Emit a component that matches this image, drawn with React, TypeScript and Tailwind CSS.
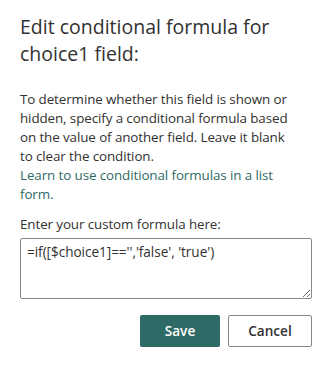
import React from "react";

const font = "'Segoe UI', 'Open Sans', sans-serif";

export default function App() {
  return (
    <div
      className="w-[333px] h-[368px] bg-white text-[#323130] pl-5 pr-[21px] pt-[13px]"
      style={{ fontFamily: font }}
    >
      <h1 className="text-[19.5px] leading-[27px] font-normal">
        Edit conditional formula for choice1 field:
      </h1>
      <div className="mt-[23px] text-[13.4px] tracking-[-0.1px] leading-[19px] whitespace-nowrap">
        <p>
          To determine whether this field is shown or
          <br />
          hidden, specify a conditional formula based
          <br />
          on the value of another field. Leave it blank
          <br />
          to clear the condition.
        </p>
        <a href="#" className="text-[#2f6b66] block">
          Learn to use conditional formulas in a list
          <br />
          form.
        </a>
      </div>
      <label className="block mt-[11px] text-[13.4px] tracking-[-0.1px] leading-[19px]">
        Enter your custom formula here:
      </label>
      <textarea
        className="mt-[4px] block w-full h-[61px] border border-[#8a8886] rounded-[2px] px-[6px] py-[3px] text-[13.6px] tracking-[-0.05px] leading-[19px] text-[#323130] outline-none"
        style={{ fontFamily: font }}
        defaultValue="=if([$choice1]=='','false', 'true')"
      />
      <div className="mt-[16px] flex justify-end gap-2">
        <button className="h-8 w-[80px] rounded-[2px] bg-[#2f6b66] text-white text-[13.6px] font-semibold">
          Save
        </button>
        <button className="h-8 w-[84px] rounded-[2px] bg-white border border-[#8a8886] text-[#323130] text-[13.6px] font-semibold">
          Cancel
        </button>
      </div>
    </div>
  );
}
